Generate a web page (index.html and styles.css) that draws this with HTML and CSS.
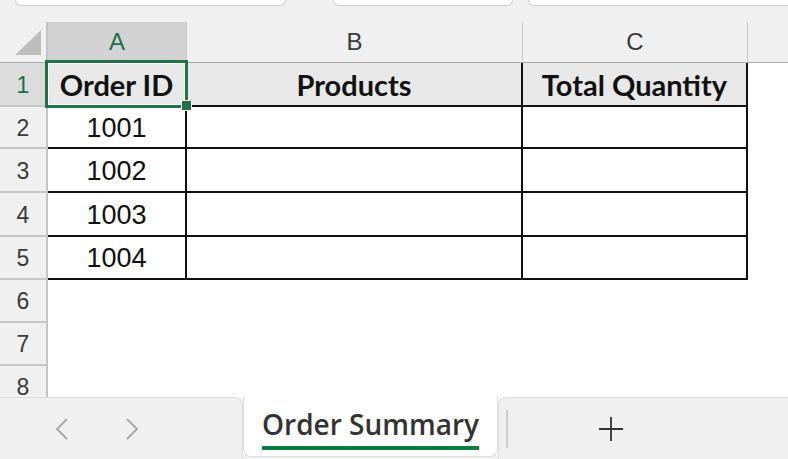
FILE: index.html
```html
<!DOCTYPE html>
<html lang="en">
<head>
    <meta charset="UTF-8">
    <title>Order Summary</title>
    <link rel="stylesheet" href="styles.css">
</head>
<body>
    <!-- top strip: bottoms of name box / formula bar -->
    <div class="topbar">
        <div class="box box-name"></div>
        <div class="box box-mid"></div>
        <div class="box box-fx"></div>
    </div>

    <!-- sheet -->
    <div class="sheet">
        <div class="grid">
            <div class="corner"><span class="corner-tri"></span></div>
            <div class="col-head active">A</div>
            <div class="col-head">B</div>
            <div class="col-head">C</div>
            <div class="col-head filler"></div>

            <div class="row-head active">1</div>
            <div class="cell head">Order ID</div>
            <div class="cell head">Products</div>
            <div class="cell head">Total Quantity</div>
            <div class="blank"></div>

            <div class="row-head">2</div>
            <div class="cell num">1001</div>
            <div class="cell"></div>
            <div class="cell"></div>
            <div class="blank"></div>

            <div class="row-head">3</div>
            <div class="cell num">1002</div>
            <div class="cell"></div>
            <div class="cell"></div>
            <div class="blank"></div>

            <div class="row-head">4</div>
            <div class="cell num">1003</div>
            <div class="cell"></div>
            <div class="cell"></div>
            <div class="blank"></div>

            <div class="row-head">5</div>
            <div class="cell num">1004</div>
            <div class="cell"></div>
            <div class="cell"></div>
            <div class="blank"></div>

            <div class="row-head">6</div>
            <div class="blank span4"></div>
            <div class="row-head">7</div>
            <div class="blank span4"></div>
            <div class="row-head">8</div>
            <div class="blank span4"></div>
        </div>

        <!-- selected cell A1 -->
        <div class="selection"></div>
        <div class="fill-handle"></div>
    </div>

    <!-- sheet tabs -->
    <div class="tabbar">
        <div class="tab-nav">
            <svg class="chev" width="16" height="24" viewBox="0 0 16 24">
                <path d="M13 2 L3 12 L13 22" fill="none" stroke="#a6a6a6" stroke-width="1.8"/>
            </svg>
            <svg class="chev" width="16" height="24" viewBox="0 0 16 24">
                <path d="M3 2 L13 12 L3 22" fill="none" stroke="#a6a6a6" stroke-width="1.8"/>
            </svg>
        </div>
        <div class="tab-active">
            <span class="tab-label">Order Summary</span>
        </div>
        <div class="tab-rest">
            <span class="tab-sep"></span>
            <svg class="plus" width="26" height="26" viewBox="0 0 26 26">
                <path d="M13 1 V25 M1 13 H25" fill="none" stroke="#333" stroke-width="1.8"/>
            </svg>
        </div>
    </div>
</body>
</html>
```

FILE: styles.css
```css
/* base */
* {
    margin: 0;
    padding: 0;
    box-sizing: border-box;
}

body {
    width: 788px;
    height: 459px;
    overflow: hidden;
    background: #fff;
    font-family: "Liberation Sans", Arial, sans-serif;
    color: #222;
}

/* top strip */
.topbar {
    height: 22px;
    background: #f0f0f0;
    display: flex;
    align-items: flex-start;
}

.box {
    height: 6px;
    background: #fff;
    border: 1px solid #cfcfcf;
    border-top: none;
    border-radius: 0 0 7px 7px;
}

.box-name {
    margin-left: 15px;
    width: 271px;
}

.box-mid {
    margin-left: 47px;
    width: 180px;
}

.box-fx {
    margin-left: 15px;
    flex: 1;
    margin-right: -10px;
}

/* sheet grid */
.sheet {
    position: relative;
    height: 375px;
    overflow: hidden;
}

.grid {
    display: grid;
    grid-template-columns: 48px 139px 336px 225px 1fr;
    grid-template-rows: 41px 44px 42px 44px 44px 43px 43px 43px 43px;
}

.corner {
    background: #f0f0f0;
    border-right: 2px solid #c4c4c4;
    border-bottom: 1px solid #a9a9a9;
    padding: 8px 0 0 15px;
}

.corner-tri {
    display: block;
    width: 0;
    height: 0;
    border-left: 26px solid transparent;
    border-bottom: 25px solid #bdbdbd;
}

.col-head {
    background: #f0f0f0;
    border-right: 1px solid #cacaca;
    border-bottom: 1px solid #a9a9a9;
    display: flex;
    align-items: center;
    justify-content: center;
    font-size: 24px;
    color: #3a3a3a;
}

.col-head.active {
    background: #d3d3d3;
    color: #1e7145;
}

.col-head.filler {
    border-right: none;
}

.row-head {
    background: #f0f0f0;
    border-right: 2px solid #c4c4c4;
    border-bottom: 2px solid #c6c6c6;
    display: flex;
    align-items: center;
    justify-content: center;
    padding-top: 2px;
    font-size: 23px;
    color: #3a3a3a;
}

.row-head.active {
    background: #dcdcdc;
    color: #1e7145;
}

.cell {
    background: #fff;
    border-right: 2px solid #111;
    border-bottom: 2px solid #111;
    display: flex;
    align-items: center;
    justify-content: center;
}

.cell.head {
    background: #e8e8e8;
    font-family: Lato, "Liberation Sans", sans-serif;
    font-weight: 700;
    font-size: 29px;
    color: #111;
}

.cell.num {
    font-size: 27px;
    color: #111;
    padding-top: 2px;
}

.span4 {
    grid-column: span 4;
}

/* selection over A1 */
.selection {
    position: absolute;
    left: 45px;
    top: 38px;
    width: 143px;
    height: 48px;
    border: 3px solid #217346;
    box-shadow: inset 0 0 0 1px #fff;
}

.fill-handle {
    position: absolute;
    left: 181px;
    top: 78px;
    width: 11px;
    height: 11px;
    background: #217346;
    border: 1px solid #fff;
}

/* sheet tabs */
.tabbar {
    height: 62px;
    display: flex;
    background: linear-gradient(#fff 58px, #f0f0f0 58px);
}

.tab-nav {
    width: 243px;
    background: #f0f0f0;
    border-top: 1px solid #dedede;
    border-right: 1px solid #dedede;
    border-top-right-radius: 8px;
    display: flex;
    align-items: center;
    gap: 54px;
    padding-left: 54px;
}

.tab-active {
    width: 255px;
    height: 60px;
    background: #fff;
    border: 1px solid #dedede;
    border-top: none;
    border-radius: 0 0 8px 8px;
    display: flex;
    align-items: flex-start;
    padding: 10px 0 0 18px;
}

.tab-label {
    font-family: "Open Sans", "Liberation Sans", sans-serif;
    font-weight: 600;
    font-size: 28px;
    line-height: 34px;
    color: #333;
    border-bottom: 4px solid #107c41;
    padding-bottom: 5px;
}

.tab-rest {
    flex: 1;
    background: #f0f0f0;
    border-top: 1px solid #dedede;
    border-left: 1px solid #dedede;
    border-top-left-radius: 8px;
    display: flex;
    align-items: center;
    padding-left: 7px;
}

.tab-sep {
    width: 2px;
    height: 38px;
    background: #cdcdcd;
}

.plus {
    margin-left: 90px;
}
```
